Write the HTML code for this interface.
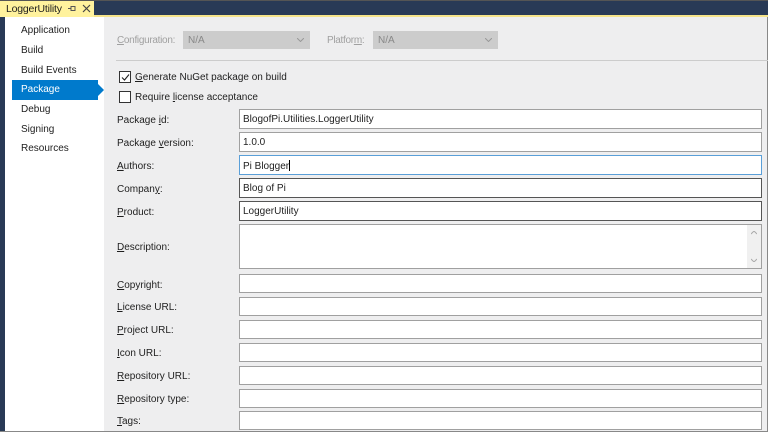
<!DOCTYPE html>
<html><head><style>
*{margin:0;padding:0;box-sizing:border-box}
body{width:768px;height:432px;overflow:hidden;background:#eeeeef;font-family:"Liberation Sans",sans-serif;font-size:10px;color:#1e1e1e;position:relative}
.a{position:absolute}
.lbl{position:absolute;left:117px;font-size:10px;color:#1e1e1e}
.in{position:absolute;left:239px;width:523px;height:20px;background:#fff;border:1px solid #a0a0a0;padding:4px 0 0 3px;font-size:10px}
.nav{position:absolute;left:21px;font-size:10px}
u{text-decoration:underline}
</style></head><body>
<div class="a" style="left:0;top:0;width:768px;height:1px;background:#555"></div>
<div class="a" style="left:0;top:1px;width:768px;height:14px;background:#293a56"></div>
<div class="a" style="left:0;top:15px;width:768px;height:2px;background:#f5e38a"></div>
<div class="a" style="left:0;top:1px;width:94px;height:16px;background:#fff29d"></div>
<div class="a" style="left:6px;top:3px;font-size:10.5px;color:#1e1e1e;letter-spacing:-0.2px">LoggerUtility</div>
<svg class="a" style="left:67px;top:4px" width="10" height="9" viewBox="0 0 10 9"><path d="M1 4.5H4M4 2.5V6.5H8V2.5Z" stroke="#555" fill="none" stroke-width="1"/></svg>
<svg class="a" style="left:82px;top:4px" width="9" height="9" viewBox="0 0 9 9"><path d="M1 1L8 8M8 1L1 8" stroke="#444" stroke-width="1.2"/></svg>
<div class="a" style="left:0;top:17px;width:5px;height:415px;background:#293a56"></div>
<div class="a" style="left:767px;top:17px;width:1px;height:415px;background:#888"></div>
<div class="a" style="left:0;top:431px;width:768px;height:1px;background:#888"></div>
<div class="a" style="left:5px;top:17px;width:99px;height:414px;background:#fff"></div>
<div class="nav" style="top:25px">Application</div>
<div class="nav" style="top:45px">Build</div>
<div class="nav" style="top:65px">Build Events</div>
<div class="a" style="left:12px;top:80px;width:86px;height:20px;background:#007acc"></div>
<div class="a" style="left:98px;top:84px;width:0;height:0;border-top:6px solid transparent;border-bottom:6px solid transparent;border-left:6px solid #007acc"></div>
<div class="nav" style="top:84px;color:#fff">Package</div>
<div class="nav" style="top:104px">Debug</div>
<div class="nav" style="top:124px">Signing</div>
<div class="nav" style="top:143px">Resources</div>

<div class="lbl" style="top:35px;color:#a0a0a0;letter-spacing:-0.3px"><u>C</u>onfiguration:</div>
<div class="a" style="left:183px;top:31px;width:127px;height:18px;background:#ccc;color:#888;padding:4px 5px;font-size:10px">N/A<svg style="position:absolute;right:6px;top:7px" width="7" height="4"><path d="M0 0L3.5 3.5L7 0" stroke="#999" fill="none"/></svg></div>
<div class="a" style="left:327px;top:35px;color:#a0a0a0;font-size:10px;letter-spacing:-0.3px">Platfor<u>m</u>:</div>
<div class="a" style="left:373px;top:31px;width:125px;height:18px;background:#ccc;color:#888;padding:4px 5px;font-size:10px">N/A<svg style="position:absolute;right:6px;top:7px" width="7" height="4"><path d="M0 0L3.5 3.5L7 0" stroke="#999" fill="none"/></svg></div>
<div class="a" style="left:116px;top:60px;width:652px;height:1px;background:#ccc"></div>

<div class="a" style="left:119px;top:71px;width:12px;height:12px;border:1px solid #333;background:#fff"><svg style="position:absolute;left:1px;top:1px" width="9" height="9"><path d="M1 4.5L3.5 7L8 1.5" stroke="#222" fill="none" stroke-width="1.1"/></svg></div>
<div class="a" style="left:135px;top:72px;font-size:10px"><u>G</u>enerate NuGet package on build</div>
<div class="a" style="left:119px;top:91px;width:12px;height:12px;border:1px solid #333;background:#fff"></div>
<div class="a" style="left:135px;top:92px;font-size:10px">Require <u>l</u>icense acceptance</div>

<div class="lbl" style="top:115px">Package <u>i</u>d:</div><div class="in" style="top:109px">BlogofPi.Utilities.LoggerUtility</div>
<div class="lbl" style="top:138px">Package <u>v</u>ersion:</div><div class="in" style="top:132px">1.0.0</div>
<div class="lbl" style="top:161px"><u>A</u>uthors:</div><div class="in" style="top:155px;border-color:#5a9fd8">Pi Blogger<span style="display:inline-block;width:1px;height:11px;background:#000;vertical-align:-2px"></span></div>
<div class="lbl" style="top:184px">Compan<u>y</u>:</div><div class="in" style="top:178px;border-color:#555">Blog of Pi</div>
<div class="lbl" style="top:207px"><u>P</u>roduct:</div><div class="in" style="top:201px;border-color:#555">LoggerUtility</div>
<div class="lbl" style="top:242px"><u>D</u>escription:</div><div class="in" style="top:224px;height:45px"><div style="position:absolute;right:0;top:0;width:14px;height:43px;background:#f0f0f0"><svg style="position:absolute;left:4px;top:6px" width="6" height="31"><path d="M0 3L3 0L6 3M0 28L3 31L6 28" stroke="#aaa" fill="none"/></svg></div></div>
<div class="lbl" style="top:280px"><u>C</u>opyright:</div><div class="in" style="top:274px;height:19px"></div>
<div class="lbl" style="top:302px"><u>L</u>icense URL:</div><div class="in" style="top:297px;height:19px"></div>
<div class="lbl" style="top:325px"><u>P</u>roject URL:</div><div class="in" style="top:320px;height:19px"></div>
<div class="lbl" style="top:348px"><u>I</u>con URL:</div><div class="in" style="top:343px;height:19px"></div>
<div class="lbl" style="top:371px"><u>R</u>epository URL:</div><div class="in" style="top:366px;height:19px"></div>
<div class="lbl" style="top:394px"><u>R</u>epository type:</div><div class="in" style="top:389px;height:19px"></div>
<div class="lbl" style="top:416px"><u>T</u>ags:</div><div class="in" style="top:411px;height:19px"></div>
</body></html>
